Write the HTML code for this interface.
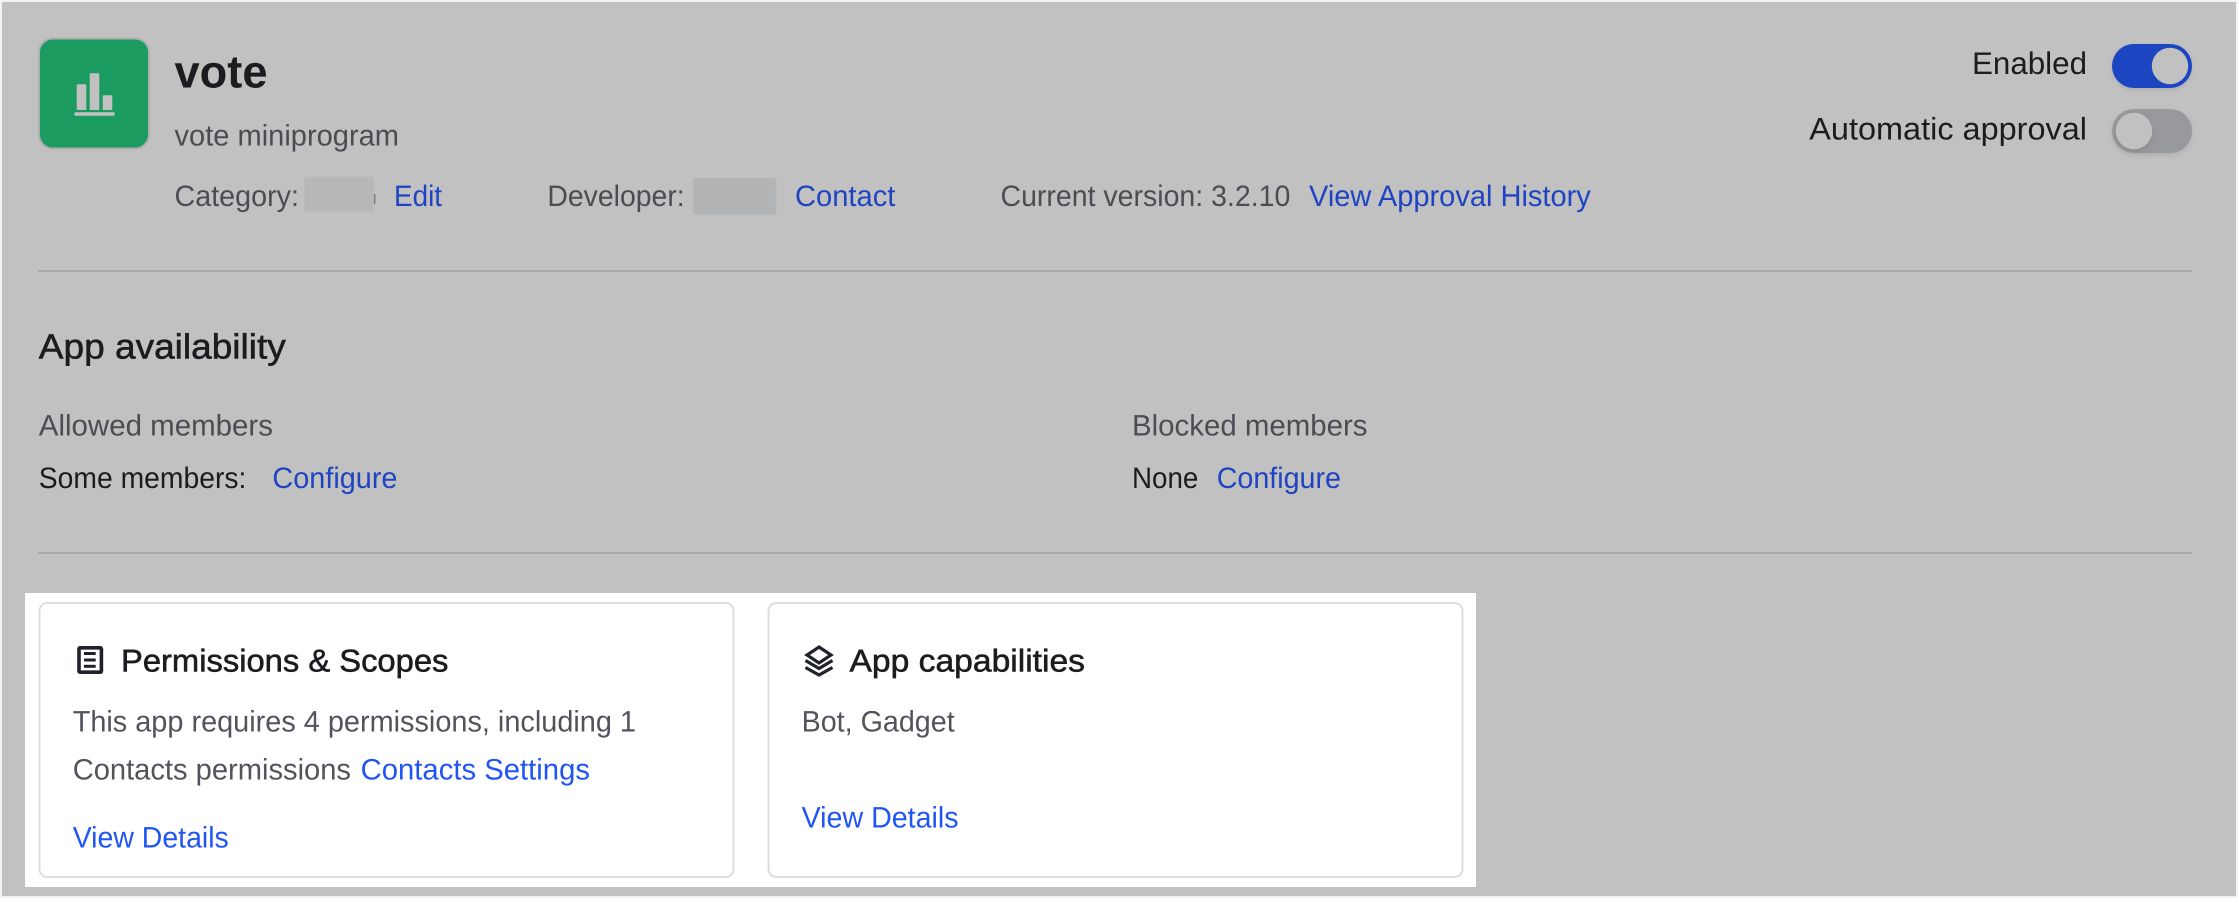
<!DOCTYPE html>
<html lang="en">
<head>
<meta charset="utf-8">
<title>vote</title>
<style>
html,body{margin:0;padding:0;background:#fff;width:2238px;height:898px;overflow:hidden}
svg{display:block}
text{font-family:"Liberation Sans",Arial,sans-serif;font-size:29.6px;text-rendering:geometricPrecision}
.g{fill:#4a4d53}
.gc{fill:#51545b}
.k{fill:#1a1c1f}
.l{fill:#1f44c2}
.b{fill:#1f54f5}
.m{stroke-width:.55px}
</style>
</head>
<body>
<svg xmlns="http://www.w3.org/2000/svg" width="2238" height="898" viewBox="0 0 2238 898">
  <defs>
    <filter id="sh" x="-20%" y="-20%" width="140%" height="150%"><feDropShadow dx="0" dy="2" stdDeviation="2.5" flood-color="#000" flood-opacity=".1"/></filter>
    <filter id="bl" x="-5%" y="-5%" width="110%" height="110%"><feGaussianBlur stdDeviation=".6"/></filter>
  </defs>
  <rect x="0" y="0" width="2238" height="898" fill="#f3f3f3"/>
  <rect x="2" y="2" width="2234" height="894" fill="#c1c1c1"/>

  <!-- logo -->
  <rect x="39" y="38.5" width="110" height="110" rx="14" fill="#1b9b60" stroke="#aeaeae" stroke-width="2"/>
  <g fill="#c1c1c1">
    <rect x="76.7" y="84.3" width="9.6" height="25.7" rx=".8"/>
    <rect x="89.7" y="73.3" width="9.6" height="36.7" rx=".8"/>
    <rect x="102.7" y="95.3" width="9.6" height="14.7" rx=".8"/>
    <rect x="74.3" y="112.3" width="40.4" height="3.4" rx="1.2"/>
  </g>

  <text x="174.5" y="87.3" font-weight="700" textLength="93" lengthAdjust="spacingAndGlyphs" class="k" style="font-size:46px">vote</text>
  <text x="174.5" y="145.3" textLength="224.5" lengthAdjust="spacingAndGlyphs" class="g">vote miniprogram</text>

  <text x="174.5" y="206" textLength="124.5" lengthAdjust="spacingAndGlyphs" class="g">Category:</text>
  <rect x="304.4" y="177" width="69.6" height="34.5" fill="#b6b7b7" filter="url(#bl)"/>
  <rect x="374" y="194" width="1.4" height="10" fill="#77797c"/>
  <text x="394" y="206" textLength="48" lengthAdjust="spacingAndGlyphs" class="l">Edit</text>
  <text x="547.4" y="206" textLength="137.3" lengthAdjust="spacingAndGlyphs" class="g">Developer:</text>
  <rect x="693" y="178" width="83" height="36.7" fill="#b2b4b5" filter="url(#bl)"/>
  <text x="795" y="206" textLength="100.4" lengthAdjust="spacingAndGlyphs" class="l">Contact</text>
  <text x="1000.5" y="206" textLength="289.8" lengthAdjust="spacingAndGlyphs" class="g">Current version: 3.2.10</text>
  <text x="1309" y="206" textLength="281.8" lengthAdjust="spacingAndGlyphs" class="l">View Approval History</text>

  <!-- toggles -->
  <text x="1972" y="74" textLength="115" lengthAdjust="spacingAndGlyphs" class="k" style="font-size:31.3px">Enabled</text>
  <text x="1809.3" y="139.3" textLength="277.7" lengthAdjust="spacingAndGlyphs" class="k" style="font-size:31.3px">Automatic approval</text>
  <rect x="2112" y="44" width="80" height="44" rx="22" fill="#1f44c2" filter="url(#sh)"/>
  <circle cx="2170" cy="66" r="18.2" fill="#c1c1c1"/>
  <rect x="2112" y="109" width="80" height="44" rx="22" fill="#98999c" filter="url(#sh)"/>
  <circle cx="2134" cy="131" r="18.2" fill="#c1c1c1" filter="url(#sh)"/>

  <rect x="38" y="270" width="2154" height="2" fill="#a7a7a7"/>

  <!-- availability -->
  <text x="38.8" y="358.3" textLength="247" lengthAdjust="spacingAndGlyphs" class="k m" stroke="#1a1c1f" style="font-size:35px">App availability</text>
  <text x="38.8" y="435.7" textLength="234.2" lengthAdjust="spacingAndGlyphs" class="g">Allowed members</text>
  <text x="38.8" y="488" textLength="207.6" lengthAdjust="spacingAndGlyphs" class="k">Some members:</text>
  <text x="272.4" y="488" textLength="125.1" lengthAdjust="spacingAndGlyphs" class="l">Configure</text>
  <text x="1132" y="435.7" textLength="235.5" lengthAdjust="spacingAndGlyphs" class="g">Blocked members</text>
  <text x="1132" y="488" textLength="66.3" lengthAdjust="spacingAndGlyphs" class="k">None</text>
  <text x="1216.7" y="488" textLength="124.3" lengthAdjust="spacingAndGlyphs" class="l">Configure</text>

  <rect x="38" y="552" width="2154" height="2" fill="#a7a7a7"/>

  <!-- highlight -->
  <rect x="25" y="593" width="1451" height="294" fill="#fff"/>
  <rect x="39.5" y="603" width="694" height="274" rx="8" fill="#fff" stroke="#dcdddd" stroke-width="2"/>
  <rect x="768.5" y="603" width="694" height="274" rx="8" fill="#fff" stroke="#dcdddd" stroke-width="2"/>

  <!-- card 1 -->
  <rect x="79" y="647.8" width="22.4" height="24.4" rx="1" fill="none" stroke="#1f2329" stroke-width="3.6"/>
  <g fill="#1f2329">
    <rect x="84" y="652" width="11.7" height="3"/>
    <rect x="84" y="658.5" width="11.7" height="3"/>
    <rect x="84" y="664.8" width="11.7" height="3"/>
  </g>
  <text x="121" y="671.3" textLength="327.4" lengthAdjust="spacingAndGlyphs" class="k m" stroke="#1a1c1f" style="font-size:31.5px">Permissions &amp; Scopes</text>
  <text x="72.7" y="731.7" textLength="563.3" lengthAdjust="spacingAndGlyphs" class="gc">This app requires 4 permissions, including 1</text>
  <text x="72.7" y="779.7" textLength="278.3" lengthAdjust="spacingAndGlyphs" class="gc">Contacts permissions</text>
  <text x="360.6" y="779.7" textLength="229.4" lengthAdjust="spacingAndGlyphs" class="b">Contacts Settings</text>
  <text x="72.7" y="847.3" textLength="156.1" lengthAdjust="spacingAndGlyphs" class="b">View Details</text>

  <!-- card 2 -->
  <g fill="none" stroke="#1f2329" stroke-width="3.2" stroke-linejoin="miter">
    <path d="M819 647L831 655L819 663L807 655Z"/>
    <path d="M805.5 660.5L819 668.5L832.5 660.5"/>
    <path d="M805.5 667.5L819 675L832.5 667.5"/>
  </g>
  <text x="849.5" y="671.3" textLength="235.5" lengthAdjust="spacingAndGlyphs" class="k m" stroke="#1a1c1f" style="font-size:31.5px">App capabilities</text>
  <text x="801.6" y="731.7" textLength="153.1" lengthAdjust="spacingAndGlyphs" class="gc">Bot, Gadget</text>
  <text x="801.6" y="827.7" textLength="157" lengthAdjust="spacingAndGlyphs" class="b">View Details</text>
</svg>
</body>
</html>
